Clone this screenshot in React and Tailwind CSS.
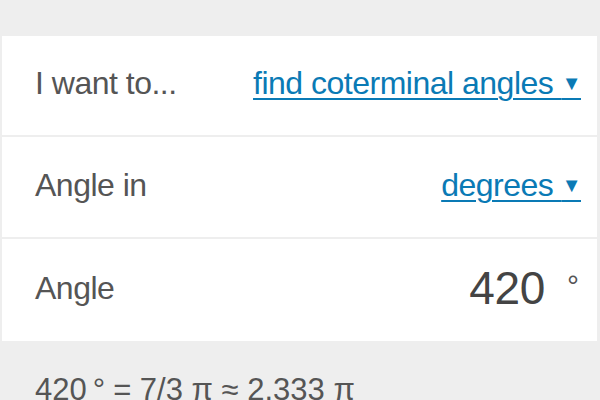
export default function App() {
  return (
    <div
      className="w-[600px] h-[400px] overflow-hidden bg-[#eeeeee] pt-[36px] pl-[2px] pr-[3px]"
      style={{ fontFamily: '"Liberation Sans", Arial, sans-serif' }}
    >
      <div className="bg-white">
        <div className="h-[101px] flex items-center justify-between pl-[33px] pr-[16px] pb-[5px] border-b-2 border-[#eeeeee]">
          <span className="text-[32px] tracking-[-0.5px] text-[#555555]">I want to...</span>
          <a className="text-[32px] tracking-[-0.5px] text-[#0a7ab5] underline underline-offset-[4px] decoration-[2px] cursor-pointer">
            find coterminal angles <span className="text-[20px] align-[4px]">▼</span>
          </a>
        </div>

        <div className="h-[102px] flex items-center justify-between pl-[33px] pr-[16px] pb-[5px] border-b-2 border-[#eeeeee]">
          <span className="text-[32px] tracking-[-0.5px] text-[#555555]">Angle in</span>
          <a className="text-[32px] tracking-[-0.5px] text-[#0a7ab5] underline underline-offset-[4px] decoration-[2px] cursor-pointer">
            degrees <span className="text-[20px] align-[4px]">▼</span>
          </a>
        </div>

        <div className="h-[102px] flex items-center justify-between pl-[33px] pr-[18px] pb-[4px]">
          <span className="text-[32px] tracking-[-0.5px] text-[#555555]">Angle</span>
          <div className="flex items-start gap-[22px]">
            <span className="text-[46px] tracking-[-0.3px] text-[#444444] leading-none">420</span>
            <span className="text-[30px] text-[#555555] leading-none mt-[6px]">°</span>
          </div>
        </div>
      </div>

      <div className="pl-[33px] pt-[26px] text-[31px] text-[#555555] whitespace-nowrap">
        420<span className="ml-[6px] mr-[8px]">°</span>= 7/3 π ≈ 2.333 π
      </div>
    </div>
  )
}
